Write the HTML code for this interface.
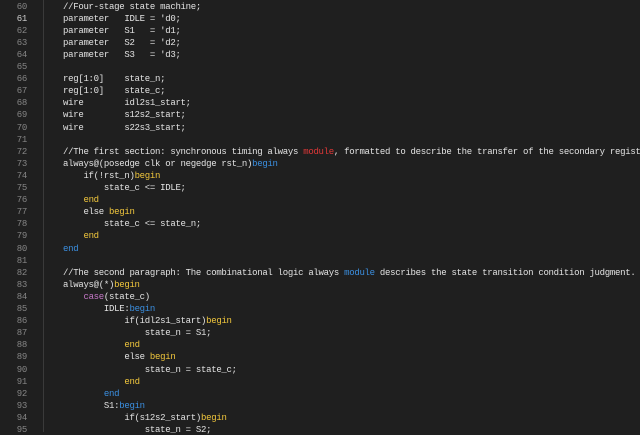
<!DOCTYPE html>
<html><head><style>
body{margin:0;width:640px;height:432px;overflow:hidden;background:#1f1f1f;font-family:"Liberation Mono","DejaVu Sans Mono",monospace;font-size:9px;letter-spacing:-0.29px;}
.ln{position:absolute;left:0;width:27px;text-align:right;color:#858585;}
.ln.cur{color:#d0d0d0}
.c{position:absolute;left:63px;color:#e2e2e2;white-space:pre;}
.gut{position:absolute;left:43px;top:0;width:1px;height:432px;background:#3a3a3a}
.y{color:#f0c63c}.b{color:#3b8fe0}.p{color:#c678c8}.r{color:#e03838}
</style></head><body>
<div class="gut"></div>
<div id="w"></div>
<script>
var L=[
"//Four-stage state machine;",
"parameter   IDLE = 'd0;",
"parameter   S1   = 'd1;",
"parameter   S2   = 'd2;",
"parameter   S3   = 'd3;",
"",
"reg[1:0]    state_n;",
"reg[1:0]    state_c;",
"wire        idl2s1_start;",
"wire        s12s2_start;",
"wire        s22s3_start;",
"",
"//The first section: synchronous timing always <span class=r>module</span>, formatted to describe the transfer of the secondary register",
"always@(posedge clk or negedge rst_n)<span class=b>begin</span>",
"    if(!rst_n)<span class=y>begin</span>",
"        state_c &lt;= IDLE;",
"    <span class=y>end</span>",
"    else <span class=y>begin</span>",
"        state_c &lt;= state_n;",
"    <span class=y>end</span>",
"<span class=b>end</span>",
"",
"//The second paragraph: The combinational logic always <span class=b>module</span> describes the state transition condition judgment.",
"always@(*)<span class=y>begin</span>",
"    <span class=p>case</span>(state_c)",
"        IDLE:<span class=b>begin</span>",
"            if(idl2s1_start)<span class=y>begin</span>",
"                state_n = S1;",
"            <span class=y>end</span>",
"            else <span class=y>begin</span>",
"                state_n = state_c;",
"            <span class=y>end</span>",
"        <span class=b>end</span>",
"        S1:<span class=b>begin</span>",
"            if(s12s2_start)<span class=y>begin</span>",
"                state_n = S2;"];
var h="";
for(var i=0;i<L.length;i++){var t=1.5+i*12.1;
h+='<div class="ln'+(i==1?' cur':'')+'" style="top:'+t+'px">'+(60+i)+'</div>';
h+='<div class="c" style="top:'+t+'px">'+L[i]+'</div>';}
document.getElementById('w').innerHTML=h;
</script>
</body></html>
